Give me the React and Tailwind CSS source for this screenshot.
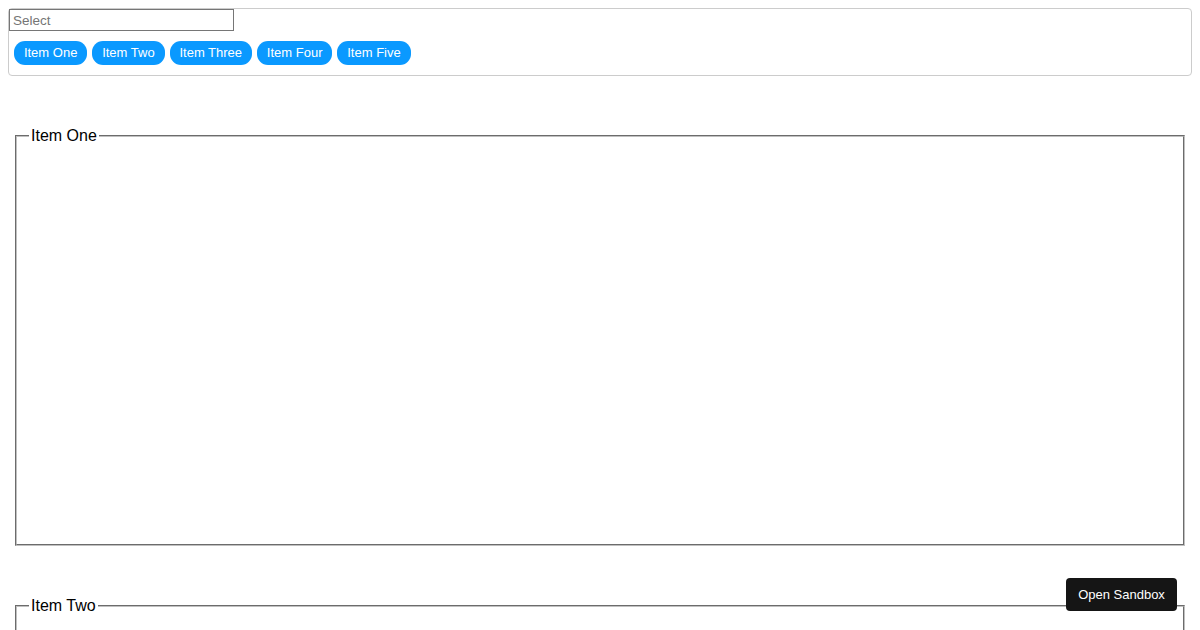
import React from 'react';

const items = ["Item One", "Item Two", "Item Three", "Item Four", "Item Five"];

const Section = ({ title }) => {
  return (
    <fieldset className="mx-[7px] mb-[51px] h-[419px] border-2 border-[#c0c0c0] [border-style:groove] px-[12px] pb-[10px]">
      <legend className="px-[2px] text-[16px] leading-[18px] text-black">{title}</legend>
    </fieldset>
  );
};

const App = () => {
  return (
    <div className="min-h-screen bg-white p-[8px] font-['Liberation_Sans',Arial,sans-serif]">
      <div className="h-[68px] rounded-[4px] border border-[#cccccc]">
        <input
          className="block h-[22px] w-[225px] border border-[#767676] px-[3px] text-[13.5px] text-black placeholder:text-[#757575] outline-none"
          placeholder="Select"
        />
        <div className="flex gap-[5px] pl-[5px] pt-[10px]">
          {items.map((item) => (
            <button
              key={item}
              className="h-[24px] rounded-[11px] bg-[#0a99ff] px-[9.9px] text-[13px] leading-[24px] text-white"
            >
              {item}
            </button>
          ))}
        </div>
      </div>
      <div className="mt-[51px]">
        {items.map((item) => (
          <Section key={item} title={item} />
        ))}
      </div>
      <button className="fixed bottom-[19px] right-[23px] h-[33px] w-[111px] rounded-[4px] bg-[#151515] text-[13px] text-white">
        Open Sandbox
      </button>
    </div>
  );
};

export default App;
